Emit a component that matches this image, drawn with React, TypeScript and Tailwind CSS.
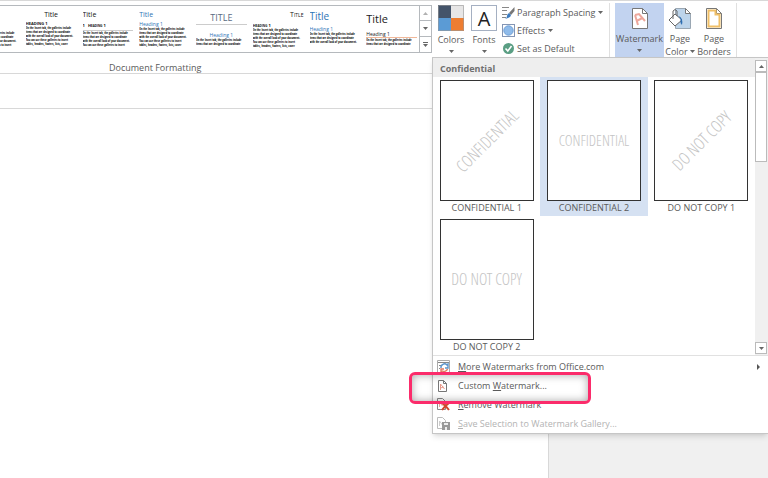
import React, { useState } from "react";
import clsx from "clsx";

const INK = "#5a5a5a";

const styleSets = [
  { title: "", heading: "", variant: "plain", lines: 4 },
  { title: "Title", heading: "HEADING 1", variant: "center", lines: 5 },
  { title: "Title", heading: "1   Heading 1", variant: "numbered", lines: 4 },
  { title: "Title", heading: "Heading 1", variant: "blue", lines: 5 },
  { title: "TITLE", heading: "Heading 1", variant: "caps", lines: 2 },
  { title: "Title", heading: "Heading 1", variant: "right", lines: 5 },
  { title: "Title", heading: "Heading 1", variant: "large", lines: 3 },
  { title: "Title", heading: "Heading 1", variant: "orange", lines: 2 },
];

const titleStyles: Record<string, string> = {
  plain: "h-5",
  center: "pt-1 text-center text-[7px] text-[#111]",
  numbered: "pt-1 text-[7px] text-[#111]",
  blue: "pt-1 text-[7px] text-[#2e74b5]",
  caps: "pt-1.5 text-center text-[9px] text-[#5a6b82] border-b border-[#ccc] pb-0.5",
  right: "pt-1 text-right text-[7px] text-[#111] [font-variant:small-caps]",
  large: "pt-1 text-[10px] text-[#2e74b5]",
  orange: "pt-1.5 text-[11px] text-[#222]",
};

const headingStyles: Record<string, string> = {
  plain: "h-1",
  center: "pt-1 text-[4px] font-bold text-[#111]",
  numbered: "pt-1.5 pb-0.5 text-[4px] font-bold text-[#111] border-b border-[#ccc] whitespace-pre [font-variant:small-caps]",
  blue: "pt-1 text-[5px] text-[#2e74b5]",
  caps: "pt-2 text-center text-[5px] text-[#2e74b5]",
  right: "pt-1.5 text-[4px] font-bold text-[#111] [font-variant:small-caps]",
  large: "pt-1.5 text-[5px] text-[#2e74b5]",
  orange: "pt-2 text-[5px] text-[#222] border-b border-[#f0b89a]",
};

const previewLines = [
  "On the Insert tab, the galleries include",
  "items that are designed to coordinate",
  "with the overall look of your document.",
  "You can use these galleries to insert",
  "tables, headers, footers, lists, cover",
];

const watermarks = [
  { name: "CONFIDENTIAL 1", text: "CONFIDENTIAL", diagonal: true, size: "text-[17px]" },
  { name: "CONFIDENTIAL 2", text: "CONFIDENTIAL", diagonal: false, size: "text-[15px]" },
  { name: "DO NOT COPY 1", text: "DO NOT COPY", diagonal: true, size: "text-[17px]" },
  { name: "DO NOT COPY 2", text: "DO NOT COPY", diagonal: false, size: "text-[16px]" },
];

function Caret({ className }: { className?: string }) {
  return (
    <svg viewBox="0 0 5 3" className={clsx("h-[3px] w-[5px] shrink-0", className)}>
      <path d="M0 0h5L2.5 3z" fill="#666" />
    </svg>
  );
}

function StylePreview({ title, heading, variant, lines }: {
  title: string;
  heading: string;
  variant: string;
  lines: number;
}) {
  return (
    <button className="flex h-[45px] min-w-0 flex-col overflow-hidden text-left leading-none">
      <span className={clsx("block w-full leading-none", titleStyles[variant])}>{title}</span>
      <span className={clsx("block w-full leading-none", headingStyles[variant])}>{heading}</span>
      <span className="block font-['Liberation_Sans_Narrow','Open_Sans_Condensed','Liberation_Sans'] text-[3px] leading-[4px] font-bold text-black">
        {previewLines.slice(0, lines).map(line => (
          <span key={line} className="block whitespace-nowrap">{line}</span>
        ))}
      </span>
    </button>
  );
}

function PageIcon({ className, children }: { className?: string; children?: React.ReactNode }) {
  return (
    <svg viewBox="0 0 18 23" className={className}>
      <path d="M1.500 1.500h10l5 5v15h-15z" fill="#fff" stroke="#777" />
      <path d="M11.500 1.500v5h5" fill="none" stroke="#777" />
      {children}
    </svg>
  );
}

function WatermarkIcon() {
  return (
    <PageIcon className="h-[23px] w-[18px]">
      <path d="M4 8l4-1 6 7M4 8l3 10M5.500 14l6-3" fill="none" stroke="#eda79c" strokeWidth="2" />
    </PageIcon>
  );
}

function CustomIcon() {
  return (
    <svg viewBox="0 0 13 13" className="h-[13px] w-[13px]">
      <path d="M1.500 1.500h5l3 3v8h-8z" fill="#fff" stroke="#777" />
      <path d="M6.500 1.500v3h3" fill="none" stroke="#777" />
      <path d="M3.500 11V5l4 5M3.500 9l3-1" fill="none" stroke="#e89a8c" />
    </svg>
  );
}

function PageColorIcon() {
  return (
    <svg viewBox="0 0 24 23" className="h-[23px] w-6">
      <path d="M7.500 1.500h10l5 5v15h-15z" fill="#bdd4ea" stroke="#9aa7b3" />
      <path d="M17.500 1.500v5h5z" fill="#fff" stroke="#777" />
      <path d="M7 7l7 6-7 6-6-6z" fill="#fff" stroke="#666" />
      <path d="M5 12V4q2-3 4 0v5" fill="none" stroke="#666" />
      <path d="M10.500 9q5 2 3.500 9l-1.500-2V12z" fill="#2f6fb3" />
    </svg>
  );
}

function SpacingIcon() {
  return (
    <svg viewBox="0 0 13 13" className="h-[13px] w-[13px]">
      <path d="M0 1.500h7M0 4.500h5M0 8.500h5M0 11.500h4" stroke="#888" />
      <path d="M12.500 1v4L9 9 7 7z" fill="#777" />
      <path d="M7 7l2 2q0 3-6 4 2-1 2-3t2-3z" fill="#3e7cbf" />
    </svg>
  );
}

function EffectsIcon() {
  return (
    <svg viewBox="0 0 13 13" className="h-[13px] w-[13px]">
      <rect x=".5" y=".5" width="12" height="12" fill="#fff" stroke="#8496b5" />
      <circle cx="6.500" cy="6.500" r="4.700" fill="#8fbbea" stroke="#6e9fd6" />
    </svg>
  );
}

function DefaultIcon() {
  return (
    <svg viewBox="0 0 13 13" className="h-[13px] w-[13px]">
      <circle cx="6.500" cy="6.500" r="5.500" fill="#5a9e83" />
      <path d="M3.500 6.500l2.300 2.500 3.700-5" fill="none" stroke="#fff" strokeWidth="1.600" />
    </svg>
  );
}

function OfficeIcon() {
  return (
    <svg viewBox="0 0 13 13" className="h-[13px] w-[13px]">
      <path d="M.5.500h12v12H.5z" fill="#fff" stroke="#aaa" />
      <path d="M1 2.500h11M2 5.500h3M2 8.500h1" stroke="#888" />
      <path d="M4 8a3.500 3.500 0 0 1 6-3l1-1v4H8" fill="none" stroke="#5b95cc" strokeWidth="1.400" />
      <path d="M10.500 9a3.500 3.500 0 0 1-5 2L4 12V9h3" fill="none" stroke="#e07a5e" strokeWidth="1.400" />
    </svg>
  );
}

function RemoveIcon() {
  return (
    <svg viewBox="0 0 13 13" className="h-[13px] w-[13px]">
      <path d="M.5.500h5l3 3v8h-8z" fill="#fff" stroke="#888" />
      <path d="M2.500 9V4l3 4" fill="none" stroke="#e5a79c" />
      <path d="M5 5q4 3 7 7M12 5q-4 3-7 7" fill="none" stroke="#d2472b" strokeWidth="2" />
    </svg>
  );
}

function SaveIcon() {
  return (
    <svg viewBox="0 0 13 13" className="h-[13px] w-[13px]">
      <path d="M.5.500h5l3 3v8h-8z" fill="#fff" stroke="#bbb" />
      <path d="M2.500 9V4l3 4" fill="none" stroke="#ccc" />
      <path d="M5 5h8v8H5z" fill="#999" />
      <path d="M7 6h4v2H7zM8 10h2v3H8z" fill="#eee" />
    </svg>
  );
}

function MenuItem({ icon, hotkey, before = "", after, disabled, submenu }: {
  icon: React.ReactNode;
  hotkey: string;
  before?: string;
  after: string;
  disabled?: boolean;
  submenu?: boolean;
}) {
  return (
    <button
      disabled={disabled}
      className="flex h-[19px] w-full items-center pr-2 pl-1 text-left disabled:text-[#b3b3b3]"
    >
      <span className="flex w-[21px] shrink-0">{icon}</span>
      <span className="flex-1 whitespace-nowrap">{before}<u>{hotkey}</u>{after}</span>
      {submenu && (
        <svg viewBox="0 0 3 6" className="h-1.5 w-[3px]"><path d="M0 0l3 3-3 3z" fill="#555" /></svg>
      )}
    </button>
  );
}

export default function App() {
  const [selected, setSelected] = useState("CONFIDENTIAL 2");

  return (
    <div
      className="relative flex min-h-screen flex-col overflow-hidden bg-white font-['Open_Sans','Noto_Sans',sans-serif] text-[9px] leading-[13px]"
      style={{ color: INK }}
    >
      {/* Ribbon */}
      <header className="flex h-[74px] border-y border-[#d8d8d8]">
        <section className="min-w-0 flex-1">
          <div className="mt-1 flex h-12 border-y border-r border-[#b5b9bd]">
            <div className="min-w-0 flex-1 overflow-hidden">
              <div className="-ml-[31px] grid grid-cols-8 gap-1.5 pt-px pr-0.5">
                {styleSets.map(set => (
                  <StylePreview key={set.variant} {...set} />
                ))}
              </div>
            </div>
            <div className="grid w-3 grid-rows-3 divide-y divide-[#b5b9bd] border-l border-[#b5b9bd]">
              <button aria-label="Previous styles" className="flex items-center justify-center">
                <Caret className="rotate-180 opacity-50" />
              </button>
              <button aria-label="Next styles" className="flex items-center justify-center"><Caret /></button>
              <button aria-label="More styles" className="flex flex-col items-center justify-center gap-px">
                <span className="h-px w-[5px] bg-[#666]" />
                <Caret />
              </button>
            </div>
          </div>
          <p className="pt-2 pl-[109px]">Document Formatting</p>
        </section>

        <section className="flex w-[336px] shrink-0 items-start pt-0.5">
          <button className="ml-1 flex w-[30px] flex-col items-center pt-0.5">
            <svg viewBox="0 0 26 26" className="h-[26px] w-[26px]">
              <path d="M0 0h13v13H0z" fill="#44546a" />
              <path d="M13 0h13v13H13z" fill="#e7e6e6" />
              <path d="M0 13h13v13H0z" fill="#5b9bd5" />
              <path d="M13 13h13v13H13z" fill="#ed7d31" />
              <path d="M.5.500h25v25H.5z" fill="none" stroke="#999" strokeOpacity=".6" />
            </svg>
            <span className="pt-0.5">Colors</span>
            <Caret className="mt-1" />
          </button>
          <button className="ml-1 flex w-[28px] flex-col items-center pt-0.5">
            <span className="flex h-[26px] w-[26px] items-center justify-center border border-[#a5b0c2] bg-white pt-0.5 text-xl leading-none text-[#222]">
              A
            </span>
            <span className="pt-0.5">Fonts</span>
            <Caret className="mt-1" />
          </button>
          <div className="ml-1 flex w-[108px] flex-col border-r border-[#e0e0e0] whitespace-nowrap">
            <button className="flex h-[18px] items-center gap-0.5"><SpacingIcon />Paragraph Spacing<Caret className="ml-px" /></button>
            <button className="flex h-[18px] items-center gap-0.5"><EffectsIcon />Effects<Caret className="ml-px" /></button>
            <button className="flex h-[18px] items-center gap-0.5"><DefaultIcon />Set as Default</button>
          </div>
          <button className="ml-[5px] flex h-[54px] w-[49px] flex-col items-center bg-[#c2d3f0] pt-1">
            <WatermarkIcon />
            <span className="pt-0.5">Watermark</span>
            <Caret className="mt-1" />
          </button>
          <button className="flex w-8 flex-col items-center pt-1">
            <PageColorIcon />
            <span className="pt-0.5">Page</span>
            <span className="flex items-center gap-0.5">Color<Caret /></span>
          </button>
          <button className="flex w-9 flex-col items-center pt-1">
            <PageIcon className="h-[23px] w-[18px]">
              <path d="M3.500 3.500h7v4h4v12h-11z" fill="none" stroke="#f0bf67" strokeWidth="2" />
            </PageIcon>
            <span className="pt-0.5">Page</span>
            <span>Borders</span>
          </button>
          <span className="ml-1 h-[54px] w-px bg-[#e0e0e0]" />
        </section>
      </header>

      {/* Document area */}
      <main className="flex flex-1 flex-col pt-[34px]">
        <div className="flex flex-1 border-t border-[#d8d8d8]">
          <div className="flex-1 border-r border-[#d8d8d8] bg-white" />
          <div className="w-[219px] bg-[#f0f0f0]" />
        </div>
      </main>

      {/* Watermark menu */}
      <div className="absolute top-[57px] right-0 w-[336px] border border-r-0 border-[#c6c6c6] bg-white shadow-md">
        <div className="flex h-[298px] border-b border-[#e1e1e1]">
          <div className="flex-1">
            <h2 className="h-[19px] bg-[#eee] pt-1 pl-[7px] font-bold text-[#707070]">Confidential</h2>
            <div className="grid grid-cols-3">
              {watermarks.map(mark => (
                <button
                  key={mark.name}
                  onClick={() => setSelected(mark.name)}
                  className={clsx("flex h-[139px] flex-col items-center pt-[3px]", selected === mark.name && "bg-[#d5e1f2]")}
                >
                  <span className="flex h-[121px] w-[94px] items-center justify-center border border-[#333] bg-white">
                    <span
                      className={clsx(
                        "font-['Open_Sans_Condensed_Light','Noto_Sans_ExtraCondensed','Noto_Sans_Condensed','Liberation_Sans_Narrow','Open_Sans_Condensed','Liberation_Sans'] whitespace-nowrap text-[#c4c4c4]",
                        mark.size,
                        mark.diagonal && "-rotate-45"
                      )}
                    >
                      {mark.text}
                    </span>
                  </span>
                  <span className="leading-[14px]">{mark.name}</span>
                </button>
              ))}
            </div>
          </div>
          <div className="flex w-[13px] flex-col bg-[#f0f0f0] pt-0.5 pr-px">
            <button aria-label="Scroll up" className="flex h-3 items-center justify-center border border-[#bbb] bg-white">
              <Caret className="rotate-180" />
            </button>
            <div className="h-[90px] border border-[#bbb] bg-white" />
            <button aria-label="Scroll down" className="mt-auto mb-px flex h-3 items-center justify-center border border-[#bbb] bg-white">
              <Caret />
            </button>
          </div>
        </div>
        <div className="pt-px">
          <MenuItem icon={<OfficeIcon />} hotkey="M" after="ore Watermarks from Office.com" submenu />
          <MenuItem icon={<CustomIcon />} before="Custom " hotkey="W" after="atermark..." />
          <MenuItem icon={<RemoveIcon />} hotkey="R" after="emove Watermark" />
          <MenuItem icon={<SaveIcon />} hotkey="S" after="ave Selection to Watermark Gallery..." disabled />
        </div>
        <div className="pointer-events-none absolute top-[314px] -left-6 h-8 w-[182px] rounded-md border-[3px] border-[#fb2c6b] shadow-[inset_0_0_8px_rgba(0,0,0,0.35)]" />
      </div>
    </div>
  );
}
